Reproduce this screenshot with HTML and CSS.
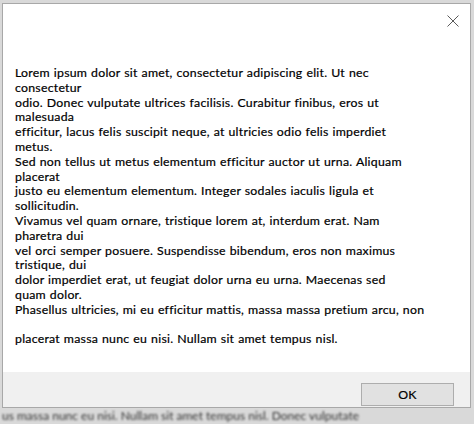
FILE: index.html
```html
<!DOCTYPE html>
<html>
<head>
<meta charset="utf-8">
<link rel="stylesheet" href="styles.css">
</head>
<body>
<div class="backdrop">
  <div class="dialog">
    <div class="content">
      <div class="titlebar">
        <svg class="close" width="12" height="12" viewBox="0 0 12 12"><path d="M0.5 0.5L11.5 11.5M11.5 0.5L0.5 11.5" stroke="#5a5a5a" stroke-width="1" fill="none"/></svg>
      </div>
      <div class="message">
        <div class="line">Lorem ipsum dolor sit amet, consectetur adipiscing elit. Ut nec</div>
        <div class="line">consectetur</div>
        <div class="line">odio. Donec vulputate ultrices facilisis. Curabitur finibus, eros ut</div>
        <div class="line">malesuada</div>
        <div class="line">efficitur, lacus felis suscipit neque, at ultricies odio felis imperdiet</div>
        <div class="line">metus.</div>
        <div class="line">Sed non tellus ut metus elementum efficitur auctor ut urna. Aliquam</div>
        <div class="line">placerat</div>
        <div class="line">justo eu elementum elementum. Integer sodales iaculis ligula et</div>
        <div class="line">sollicitudin.</div>
        <div class="line">Vivamus vel quam ornare, tristique lorem at, interdum erat. Nam</div>
        <div class="line">pharetra dui</div>
        <div class="line">vel orci semper posuere. Suspendisse bibendum, eros non maximus</div>
        <div class="line">tristique, dui</div>
        <div class="line">dolor imperdiet erat, ut feugiat dolor urna eu urna. Maecenas sed</div>
        <div class="line">quam dolor.</div>
        <div class="line">Phasellus ultricies, mi eu efficitur mattis, massa massa pretium arcu, non</div>
        <div class="line">&nbsp;</div>
        <div class="line">placerat massa nunc eu nisi. Nullam sit amet tempus nisl.</div>
      </div>
    </div>
    <div class="footer">
      <button class="ok">OK</button>
    </div>
  </div>
  <div class="behind">us massa nunc eu nisi. Nullam sit amet tempus nisl. Donec vulputate</div>
</div>
</body>
</html>
```

FILE: styles.css
```css
html, body {
  margin: 0;
  padding: 0;
}
body {
  width: 474px;
  height: 424px;
  overflow: hidden;
  background: #d9d9d9;
  font-family: Lato, "Open Sans", sans-serif;
}
.backdrop {
  padding: 3px 3px 0 2px;
  display: flex;
  flex-direction: column;
}
.dialog {
  width: 467px;
  height: 403px;
  border: 1px solid #a8a8a8;
  background: #ffffff;
  display: flex;
  flex-direction: column;
}
.content {
  flex: 1;
  display: flex;
  flex-direction: column;
}
.titlebar {
  height: 62px;
  display: flex;
  justify-content: flex-end;
  align-items: flex-start;
  padding: 11px 11px 0 0;
  box-sizing: border-box;
}
.close {
  display: block;
}
.message {
  padding-left: 12px;
  font-size: 12.3px;
  line-height: 14.8px;
  letter-spacing: 0.25px;
  word-spacing: 0.5px;
  color: #000000;
  -webkit-text-stroke: 0.2px #000000;
}
.line {
  white-space: nowrap;
}
.footer {
  height: 35px;
  background: #f0f0f0;
  display: flex;
  justify-content: flex-end;
  align-items: flex-start;
  padding: 11px 16px 0 0;
  box-sizing: border-box;
}
.ok {
  width: 93px;
  height: 23px;
  margin: 0;
  padding: 0;
  border: 1px solid #adadad;
  background: #e1e1e1;
  color: #000000;
  font-family: Lato, "Open Sans", sans-serif;
  font-size: 12.3px;
  letter-spacing: 0.2px;
  line-height: 21px;
  -webkit-text-stroke: 0.2px #000000;
}
.behind {
  padding: 1px 0 0 0;
  font-size: 12px;
  line-height: 14px;
  color: #333333;
  white-space: nowrap;
  filter: blur(0.8px);
}
```
